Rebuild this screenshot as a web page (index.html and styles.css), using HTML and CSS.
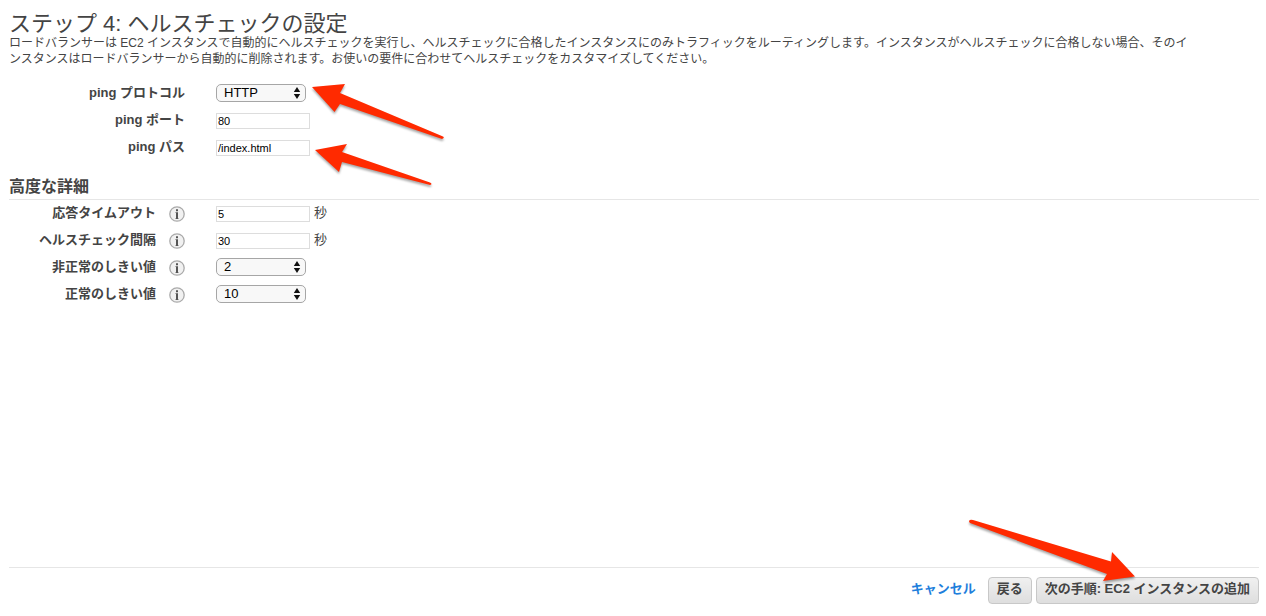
FILE: index.html
```html
<!DOCTYPE html>
<html lang="ja">
<head>
<meta charset="utf-8">
<title>ステップ 4: ヘルスチェックの設定</title>
<link rel="stylesheet" href="styles.css">
</head>
<body>
<svg class="sprite" aria-hidden="true">
  <defs>
    <symbol id="updown" viewBox="0 0 8 12"><path d="M4 0 7.2 5H.8zM4 12 .8 7h6.400z" fill="#111"/></symbol>
    <symbol id="info" viewBox="0 0 16 16">
      <circle cx="8" cy="8" r="7.2" fill="#f1f1f1" stroke="#aaa" stroke-width="1.3"/>
      <path d="M7 3.300h2v2H7zM6.500 6.300H9v6h.5v.7h-3v-.7H7V7h-.5z" fill="#555"/>
    </symbol>
  </defs>
</svg>
<main class="page">
  <h1 class="title">ステップ 4: ヘルスチェックの設定</h1>
  <p class="intro">ロードバランサーは EC2 インスタンスで自動的にヘルスチェックを実行し、ヘルスチェックに合格したインスタンスにのみトラフィックをルーティングします。インスタンスがヘルスチェックに合格しない場合、そのイ<br>ンスタンスはロードバランサーから自動的に削除されます。お使いの要件に合わせてヘルスチェックをカスタマイズしてください。</p>

  <form class="form" id="health">
    <div class="group">
      <div class="row">
        <label class="label wide" for="protocol">ping プロトコル</label>
        <div class="select">
          <select id="protocol"><option>HTTP</option><option>HTTPS</option><option>TCP</option></select>
          <svg class="updown"><use href="#updown"/></svg>
          <svg class="arrow arrow-protocol" viewBox="0 0 136 60" aria-hidden="true"><path d="M0 3 33 0 28 9 131 52.500Q133 54 130 55L28 20 22.500 28z"/></svg>
        </div>
      </div>
      <div class="row">
        <label class="label wide" for="port">ping ポート</label>
        <input class="text" id="port" type="text" value="80">
      </div>
      <div class="row">
        <label class="label wide" for="path">ping パス</label>
        <div class="field">
          <input class="text" id="path" type="text" value="/index.html">
          <svg class="arrow arrow-path" viewBox="0 0 120 46" aria-hidden="true"><path d="M0 6 32 0 27 8 115 38.500Q118 40 115 41L27 18 24 28z"/></svg>
        </div>
      </div>
    </div>

    <h2 class="heading">高度な詳細</h2>
    <div class="group">
      <div class="row">
        <label class="label" for="timeout">応答タイムアウト</label>
        <svg class="info"><use href="#info"/></svg>
        <input class="text" id="timeout" type="text" value="5"><span class="unit">秒</span>
      </div>
      <div class="row">
        <label class="label" for="interval">ヘルスチェック間隔</label>
        <svg class="info"><use href="#info"/></svg>
        <input class="text" id="interval" type="text" value="30"><span class="unit">秒</span>
      </div>
      <div class="row">
        <label class="label" for="unhealthy">非正常のしきい値</label>
        <svg class="info"><use href="#info"/></svg>
        <div class="select">
          <select id="unhealthy"><option>2</option><option>3</option></select>
          <svg class="updown"><use href="#updown"/></svg>
        </div>
      </div>
      <div class="row">
        <label class="label" for="healthy">正常のしきい値</label>
        <svg class="info"><use href="#info"/></svg>
        <div class="select">
          <select id="healthy"><option>10</option><option>9</option></select>
          <svg class="updown"><use href="#updown"/></svg>
        </div>
      </div>
    </div>
  </form>

  <footer class="footer">
    <a class="cancel" href="#">キャンセル</a>
    <button class="button" type="button">戻る</button>
    <button class="button" type="submit" form="health">次の手順: EC2 インスタンスの追加</button>
    <svg class="arrow arrow-next" viewBox="0 0 168 64" aria-hidden="true"><path d="M0 1Q1-1 4 0L142 41.500 143 32 166 56.500 134 61 138 54 1 3Q0 2 0 1z"/></svg>
  </footer>
</main>
</body>
</html>
```
FILE: styles.css
```css
* { box-sizing: border-box; }

body {
  margin: 0;
  background: #fff;
  color: #444;
  font-family: "Liberation Sans", "Noto Sans CJK JP", sans-serif;
  font-size: 13px;
  line-height: 16px;
}

.sprite { position: absolute; width: 0; height: 0; }

.page {
  display: flex;
  flex-direction: column;
  min-height: 100vh;
  padding: 13px 7px 12px 9px;
}

.title {
  margin: 0;
  font-size: 22px;
  font-weight: 400;
  line-height: 22px;
}

.intro {
  margin: 0;
  font-size: 12px;
}

.form { padding-top: 13px; }

.group {
  display: flex;
  flex-direction: column;
  gap: 2px;
}

.row {
  display: flex;
  align-items: center;
  height: 25px;
}

.label {
  width: 147px;
  font-weight: 700;
  text-align: right;
  white-space: nowrap;
}

.wide {
  width: 176px;
  margin-right: 31px;
}

.info {
  width: 16px;
  height: 16px;
  margin: 2px 31px 0 13px;
}

.field { position: relative; display: flex; }

.text {
  width: 94px;
  height: 16px;
  margin-top: 2px;
  padding: 0 1px;
  border: 1px solid #ddd;
  background: #fff;
  color: #000;
  font: 11px "Liberation Sans", sans-serif;
}

.unit { margin-left: 4px; }

.select { position: relative; display: flex; }

.select select {
  width: 90px;
  height: 18px;
  padding: 0 20px 0 7px;
  appearance: none;
  border: 1px solid #a6a6a6;
  border-radius: 5px;
  background: #f8f8f8;
  color: #000;
  font: 13px "Liberation Sans", sans-serif;
}

.updown {
  position: absolute;
  top: 3px;
  right: 5px;
  width: 8px;
  height: 12px;
  pointer-events: none;
}

.heading {
  margin: 16px 0 0;
  border-bottom: 1px solid #e6e6e6;
  font-size: 16px;
  line-height: 24px;
}

.footer {
  position: relative;
  display: flex;
  align-items: center;
  justify-content: flex-end;
  gap: 4px;
  margin-top: auto;
  padding-top: 9px;
  border-top: 1px solid #e6e6e6;
}

.cancel {
  margin-right: 8px;
  padding-bottom: 3px;
  color: #1f7fdc;
  font-weight: 700;
  text-decoration: none;
}

.button {
  height: 27px;
  padding: 0 8px 3px;
  border: 1px solid #c8c8c8;
  border-radius: 4px;
  background: linear-gradient(#f0f0f0, #dedede);
  color: #444;
  font: inherit;
  font-weight: 700;
  white-space: nowrap;
}

.arrow {
  position: absolute;
  overflow: visible;
  fill: #ff2a00;
  filter: drop-shadow(0 2px 1px rgba(0, 0, 0, 0.35));
  pointer-events: none;
}

.arrow-protocol { top: 0; left: 96px; width: 136px; height: 60px; }
.arrow-path { top: 6px; left: 99px; width: 120px; height: 46px; }
.arrow-next { top: -48px; right: 122px; width: 168px; height: 64px; }
```
